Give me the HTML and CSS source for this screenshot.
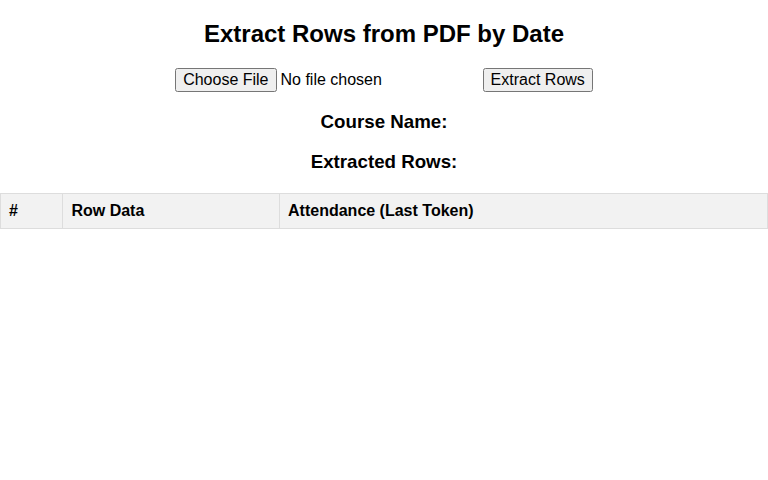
FILE: index.html
```html
<!DOCTYPE html>
<html>
<head>
    <title>Extract Rows from PDF by Date</title>
    <link rel="stylesheet" href="styles.css">
</head>
<body>
    <h1>Extract Rows from PDF by Date</h1>
    <div class="controls">
        <input type="file" id="pdfFile" accept="application/pdf">
        <button id="extractBtn">Extract Rows</button>
    </div>
    <h3>Course Name: <span id="courseName"></span></h3>
    <h3>Extracted Rows:</h3>
    <table id="resultTable">
        <thead>
            <tr>
                <th>#</th>
                <th>Row Data</th>
                <th>Attendance (Last Token)</th>
            </tr>
        </thead>
        <tbody></tbody>
    </table>
</body>
</html>
```

FILE: styles.css
```css
body {
    font-family: "Liberation Sans", Arial, sans-serif;
    margin: 0;
    padding-top: 20px;
    text-align: center;
}

h1 {
    font-size: 24px;
    margin: 0 0 20px 0;
}

.controls input,
.controls button {
    font-family: "Liberation Sans", Arial, sans-serif;
    font-size: 16px;
    margin: 0;
}

h3 {
    font-size: 18.72px;
    margin: 18.72px 0;
}

table {
    width: 100%;
    border-collapse: collapse;
    text-align: left;
    margin-top: 20px;
}

th, td {
    border: 1px solid #ddd;
    padding: 8px;
}

th {
    background-color: #f2f2f2;
}
```
